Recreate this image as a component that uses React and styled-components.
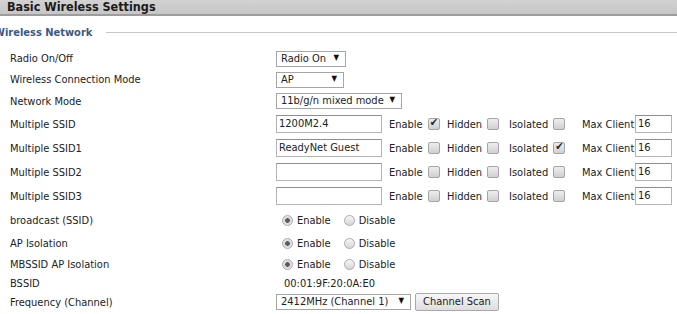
import styled, { createGlobalStyle } from "styled-components";

const Global = createGlobalStyle`
  body {
    margin: 0;
    background: #fff;
    font-family: "DejaVu Sans Condensed", "Liberation Sans", sans-serif;
    font-size: 11px;
    color: #222;
  }
`;

const Page = styled.div`
  width: 677px;
  height: 314px;
  overflow: hidden;
`;

const TitleBar = styled.div`
  height: 14px;
  padding-left: 7px;
  background: linear-gradient(#d2d2d2, #c6c6c6);
  border-bottom: 2px solid #9c9c9c;
  font-weight: bold;
  font-size: 12.5px;
  line-height: 14px;
  color: #1a1a1a;
`;

const Legend = styled.div`
  display: flex;
  align-items: center;
  height: 32px;
  margin-left: -6px;
  font-weight: bold;
  color: #3c5a80;

  &::after {
    content: "";
    flex: 1;
    margin-left: 14px;
    border-top: 1px solid #c8c8c8;
  }
`;

const Row = styled.div`
  display: grid;
  grid-template-columns: 276px 1fr;
  align-items: center;
  height: ${(p) => p.$h}px;
`;

const Label = styled.div`
  padding-left: 10px;
  white-space: nowrap;
`;

const Field = styled.div`
  display: flex;
  align-items: center;
  white-space: nowrap;
`;

const Select = styled.div`
  position: relative;
  box-sizing: border-box;
  width: ${(p) => p.$w}px;
  height: 16px;
  padding-left: 4px;
  border: 1px solid #a6a6a6;
  background: #fff;
  line-height: 14px;

  &::after {
    content: "▼";
    position: absolute;
    right: 6px;
    top: 0;
    font-size: 8px;
    line-height: 12px;
    color: #111;
  }
`;

const TextBox = styled.div`
  box-sizing: border-box;
  width: ${(p) => p.$w}px;
  height: 18px;
  padding-left: 2px;
  border: 1px solid #b3b3b3;
  border-top-color: #8e8e8e;
  background: #fff;
  line-height: 16px;
`;

const CheckCell = styled.div`
  display: flex;
  align-items: center;
  width: ${(p) => p.$w}px;
  padding-left: ${(p) => p.$pl || 0}px;
  box-sizing: border-box;
`;

const Box = styled.span`
  position: relative;
  display: inline-block;
  box-sizing: border-box;
  width: 12px;
  height: 12px;
  margin-left: 5px;
  border: 1px solid #a5a5a5;
  border-radius: 2px;
  background: linear-gradient(#ededed, #d0d0d0);

  &::after {
    content: ${(p) => (p.$checked ? '"✔"' : "none")};
    position: absolute;
    left: 1px;
    top: -3px;
    font-size: 11px;
    color: #2a2a2a;
  }
`;

const Radio = styled.span`
  display: inline-block;
  box-sizing: border-box;
  width: 11px;
  height: 11px;
  margin-left: ${(p) => p.$ml}px;
  margin-right: 4px;
  border-radius: 50%;
  border: 1px solid #ababab;
  background: ${(p) =>
    p.$on
      ? "radial-gradient(circle, #5c5c5c 0 2px, #d8d8d8 2.6px, #efefef)"
      : "linear-gradient(#f6f6f6, #d6d6d6)"};
`;

const Button = styled.div`
  box-sizing: border-box;
  height: 18px;
  margin-left: 4px;
  padding: 0 7px;
  border: 1px solid #a9a9a9;
  border-radius: 2px;
  background: linear-gradient(#f7f7f7, #dedede);
  line-height: 16px;
`;

const Mac = styled.span`
  padding-left: 8px;
`;

const ssids = [
  { name: "Multiple SSID", value: "1200M2.4", enable: true, isolated: false },
  { name: "Multiple SSID1", value: "ReadyNet Guest", enable: false, isolated: true },
  { name: "Multiple SSID2", value: "", enable: false, isolated: false },
  { name: "Multiple SSID3", value: "", enable: false, isolated: false },
];

const radios = [
  { name: "broadcast (SSID)", h: 25 },
  { name: "AP Isolation", h: 21 },
  { name: "MBSSID AP Isolation", h: 20 },
];

export default function App() {
  return (
    <Page>
      <Global />
      <TitleBar>Basic Wireless Settings</TitleBar>
      <Legend>Wireless Network</Legend>
      <Row $h={21}>
        <Label>Radio On/Off</Label>
        <Field>
          <Select $w={70}>Radio On</Select>
        </Field>
      </Row>
      <Row $h={21}>
        <Label>Wireless Connection Mode</Label>
        <Field>
          <Select $w={68}>AP</Select>
        </Field>
      </Row>
      <Row $h={22}>
        <Label>Network Mode</Label>
        <Field>
          <Select $w={126}>11b/g/n mixed mode</Select>
        </Field>
      </Row>
      {ssids.map((s) => (
        <Row $h={24} key={s.name}>
          <Label>{s.name}</Label>
          <Field>
            <TextBox $w={106}>{s.value}</TextBox>
            <CheckCell $w={65} $pl={7}>
              Enable<Box $checked={s.enable} />
            </CheckCell>
            <CheckCell $w={62}>
              Hidden<Box />
            </CheckCell>
            <CheckCell $w={73}>
              Isolated<Box $checked={s.isolated} />
            </CheckCell>
            <CheckCell $w={53}>Max Client</CheckCell>
            <TextBox $w={37}>16</TextBox>
          </Field>
        </Row>
      ))}
      {radios.map((r) => (
        <Row $h={r.h} key={r.name}>
          <Label>{r.name}</Label>
          <Field>
            <Radio $ml={6} $on />
            Enable
            <Radio $ml={13} />
            Disable
          </Field>
        </Row>
      ))}
      <Row $h={19}>
        <Label>BSSID</Label>
        <Field>
          <Mac>00:01:9F:20:0A:E0</Mac>
        </Field>
      </Row>
      <Row $h={18}>
        <Label>Frequency (Channel)</Label>
        <Field>
          <Select $w={135}>2412MHz (Channel 1)</Select>
          <Button>Channel Scan</Button>
        </Field>
      </Row>
    </Page>
  );
}
